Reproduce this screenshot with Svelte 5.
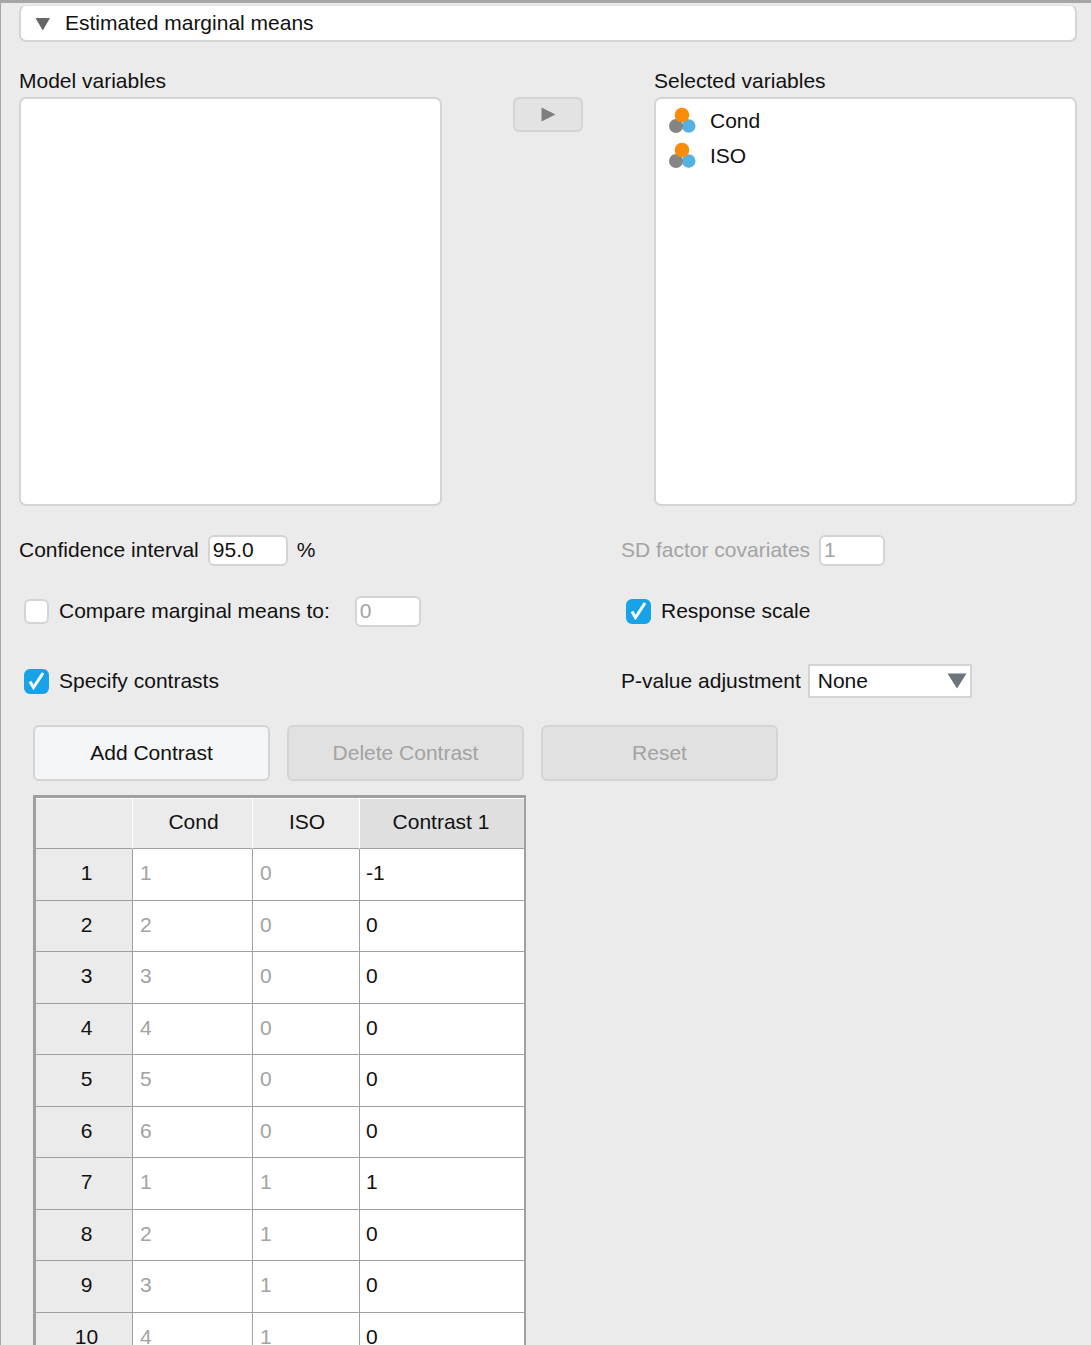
<script lang="ts">
  const selected = ['Cond', 'ISO'];

  // Контрасты: номер, Cond, ISO, значение
  const rows = [
    [1, 1, 0, '-1'],
    [2, 2, 0, '0'],
    [3, 3, 0, '0'],
    [4, 4, 0, '0'],
    [5, 5, 0, '0'],
    [6, 6, 0, '0'],
    [7, 1, 1, '1'],
    [8, 2, 1, '0'],
    [9, 3, 1, '0'],
    [10, 4, 1, '0']
  ];
</script>

<div class="page">
  <div class="section-head">
    <svg class="caret" width="16" height="14" viewBox="0 0 16 14"><path d="M0.5 1H15L7.8 13.5Z" fill="#666" /></svg>
    <span>Estimated marginal means</span>
  </div>

  <div class="vars">
    <div class="var-col">
      <div class="label">Model variables</div>
      <div class="list"></div>
    </div>
    <div class="mid">
      <button class="arrow" aria-label="Move">
        <svg width="15" height="15" viewBox="0 0 15 15"><path d="M0.5 0.5L14.5 7.5L0.5 14.5Z" fill="#7f7f7f" /></svg>
      </button>
    </div>
    <div class="var-col">
      <div class="label">Selected variables</div>
      <div class="list selected">
        {#each selected as name}
          <div class="var-item">
            <svg class="nominal" width="28" height="28" viewBox="0 0 28 28">
              <circle cx="20.7" cy="18" r="6.8" fill="#55b2e0" />
              <circle cx="8" cy="18" r="7" fill="#858585" />
              <circle cx="14" cy="7" r="7.3" fill="#fb8b0a" />
            </svg>
            <span>{name}</span>
          </div>
        {/each}
      </div>
    </div>
  </div>

  <div class="options">
    <div class="opt ci">
      <span>Confidence interval</span>
      <div class="input w80">95.0</div>
      <span class="pct">%</span>
    </div>
    <div class="opt sd">
      <span class="off">SD factor covariates</span>
      <div class="input w66 off">1</div>
    </div>

    <div class="opt cmp">
      <div class="check"></div>
      <span>Compare marginal means to:</span>
      <div class="input w66 off cmp-input">0</div>
    </div>
    <div class="opt resp">
      <div class="check on">
        <svg width="17" height="18" viewBox="0 0 17 18"><path d="M2 9.5L5.5 15.5L15 1" fill="none" stroke="#fff" stroke-width="3" /></svg>
      </div>
      <span>Response scale</span>
    </div>

    <div class="opt spec">
      <div class="check on">
        <svg width="17" height="18" viewBox="0 0 17 18"><path d="M2 9.5L5.5 15.5L15 1" fill="none" stroke="#fff" stroke-width="3" /></svg>
      </div>
      <span>Specify contrasts</span>
    </div>
    <div class="opt padj">
      <span>P-value adjustment</span>
      <div class="select">
        <span>None</span>
        <svg width="20" height="16" viewBox="0 0 20 16"><path d="M0.5 0.5H19.5L10 15.5Z" fill="#6c757d" /></svg>
      </div>
    </div>
  </div>

  <div class="buttons">
    <button class="btn">Add Contrast</button>
    <button class="btn disabled">Delete Contrast</button>
    <button class="btn disabled">Reset</button>
  </div>

  <div class="table">
    <div class="cell head"></div>
    <div class="cell head cond">Cond</div>
    <div class="cell head iso">ISO</div>
    <div class="cell head last contrast">Contrast 1</div>
    {#each rows as row}
      <div class="cell num">{row[0]}</div>
      <div class="cell val off">{row[1]}</div>
      <div class="cell val off">{row[2]}</div>
      <div class="cell val last">{row[3]}</div>
    {/each}
  </div>
</div>

<style>
  :global(body) {
    margin: 0;
    background: #ebebeb;
  }

  .page {
    box-sizing: border-box;
    width: 1091px;
    height: 1345px;
    overflow: hidden;
    padding: 2px 14px 0 18px;
    border-top: 3px solid #a6a6a6;
    border-left: 1px solid #a6a6a6;
    font-family: "Liberation Sans", Arial, sans-serif;
    font-size: 21px;
    color: #111;
    background: #ebebeb;
  }

  .section-head {
    box-sizing: border-box;
    height: 37px;
    display: flex;
    align-items: center;
    gap: 14px;
    padding: 0 0 0 14px;
    background: #fff;
    border: 2px solid #d4d4d4;
    border-top: 1px solid #e2e2e2;
    border-radius: 7px;
  }

  .caret {
    margin-top: 1px;
  }

  .vars {
    display: grid;
    grid-template-columns: 423px 212px 423px;
    margin-top: 24px;
  }

  .label {
    height: 31px;
    line-height: 30px;
  }

  .list {
    box-sizing: border-box;
    height: 409px;
    background: #fff;
    border: 2px solid #d4d4d4;
    border-radius: 7px;
  }

  .selected {
    padding: 5px 0 0 12px;
  }

  .var-item {
    height: 35px;
    display: flex;
    align-items: center;
    gap: 14px;
  }

  .var-item span {
    padding-bottom: 2px;
  }

  .mid {
    padding-top: 31px;
    padding-left: 71px;
  }

  .arrow {
    box-sizing: border-box;
    display: flex;
    align-items: center;
    justify-content: center;
    width: 70px;
    height: 35px;
    padding: 0;
    background: #e3e3e3;
    border: 2px solid #d4d4d4;
    border-radius: 6px;
  }

  .options {
    display: grid;
    grid-template-columns: 602px 1fr;
    grid-template-rows: 61px 69px 36px;
    margin-top: 27px;
  }

  .opt {
    display: flex;
    align-items: center;
    height: 34px;
  }

  .spec,
  .padj {
    height: 36px;
  }

  .ci .input {
    margin-left: 9px;
  }

  .pct {
    margin-left: 9px;
  }

  .input {
    box-sizing: border-box;
    height: 31px;
    line-height: 26px;
    padding-left: 3px;
    background: #fff;
    border: 2px solid #d4d4d4;
    border-radius: 6px;
  }

  .w80 {
    width: 80px;
  }

  .w66 {
    width: 66px;
    margin-left: 9px;
  }

  .off {
    color: #a3a3a3;
  }

  .check {
    box-sizing: border-box;
    width: 25px;
    height: 25px;
    margin: 0 10px 0 5px;
    display: flex;
    align-items: center;
    justify-content: center;
    background: #fff;
    border: 2px solid #d4d4d4;
    border-radius: 6px;
  }

  .check.on {
    background: #17a3e6;
    border-color: #17a3e6;
  }

  .cmp-input {
    margin-left: 25px;
  }

  .padj > span {
    margin-right: 7px;
  }

  .select {
    box-sizing: border-box;
    width: 164px;
    height: 34px;
    display: flex;
    align-items: center;
    justify-content: space-between;
    padding: 0 3px 0 8px;
    background: #fff;
    border: 2px solid #d4d4d4;
  }

  .buttons {
    display: flex;
    gap: 17px;
    margin: 26px 0 14px 14px;
  }

  .btn {
    box-sizing: border-box;
    width: 237px;
    height: 56px;
    padding: 0;
    background: #f4f5f7;
    border: 2px solid #d4d4d4;
    border-radius: 6px;
    font: inherit;
    color: #111;
  }

  .btn.disabled {
    background: #e1e1e1;
    color: #a3a3a3;
  }

  .table {
    box-sizing: border-box;
    width: 493px;
    margin-left: 14px;
    display: grid;
    grid-template-columns: 97px 120px 107px 1fr;
    grid-template-rows: 51px;
    grid-auto-rows: 51.5px;
    background: #fff;
    border-top: 3px solid #a0a0a0;
    border-left: 3px solid #a0a0a0;
    border-right: 2px solid #a0a0a0;
  }

  .cell {
    box-sizing: border-box;
    display: flex;
    align-items: center;
    padding-bottom: 2px;
    border-right: 1px solid #a0a0a0;
    border-bottom: 1px solid #a0a0a0;
  }

  .head {
    justify-content: center;
    padding-bottom: 3px;
    background: #ebebeb;
    border-top: 1px solid #fff;
    border-right-color: #fff;
  }

  .cond {
    padding-left: 2px;
  }

  .iso {
    padding-left: 2px;
  }

  .contrast {
    padding-right: 2px;
    background: #dfdfdf;
  }

  .num {
    justify-content: center;
    padding-left: 5px;
    background: #ebebeb;
  }

  .val {
    padding-left: 7px;
  }

  .last {
    border-right: none;
  }

  .val.last {
    padding-left: 6px;
  }
</style>
